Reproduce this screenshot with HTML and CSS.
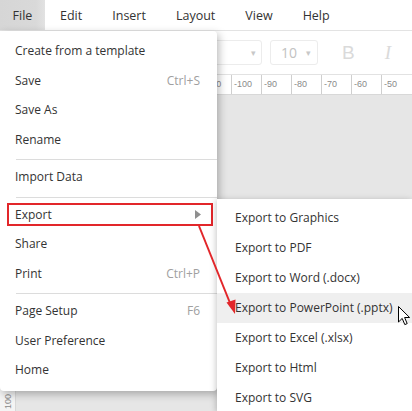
FILE: index.html
```html
<!DOCTYPE html>
<html>
<head>
<meta charset="utf-8">
<link rel="stylesheet" href="styles.css">
</head>
<body>
<div class="app">
  <div class="menubar">
    <div class="mb-item active">File</div>
    <div class="mb-item">Edit</div>
    <div class="mb-item">Insert</div>
    <div class="mb-item">Layout</div>
    <div class="mb-item">View</div>
    <div class="mb-item">Help</div>
  </div>
  <div class="toolbar">
    <div class="tb-select wide"><span class="caret">▾</span></div>
    <div class="tb-select size"><span class="val">10</span><span class="caret">▾</span></div>
    <div class="tb-btn bold">B</div>
    <div class="tb-btn italic">I</div>
  </div>
  <div class="ruler">
    <div class="tick">-110</div><div class="tick">-100</div>
    <div class="tick">-90</div><div class="tick">-80</div><div class="tick">-70</div><div class="tick">-60</div>
    <div class="tick">-50</div>
  </div>
  <div class="canvas">
    <div class="vruler"><span class="vlabel">100</span></div>
    <div class="sheet"></div>
  </div>
</div>

<div class="file-menu">
  <div class="mi">Create from a template</div>
  <div class="mi"><span>Save</span><span class="key">Ctrl+S</span></div>
  <div class="mi">Save As</div>
  <div class="mi">Rename</div>
  <div class="sep"></div>
  <div class="mi">Import Data</div>
  <div class="sep"></div>
  <div class="mi export"><span>Export</span>
    <svg class="sub-arrow" width="6" height="9" viewBox="0 0 6 9"><path d="M0 0 L6 4.5 L0 9 Z" fill="#8f8f8f"/></svg>
  </div>
  <div class="mi">Share</div>
  <div class="mi"><span>Print</span><span class="key">Ctrl+P</span></div>
  <div class="sep"></div>
  <div class="mi"><span>Page Setup</span><span class="key">F6</span></div>
  <div class="mi">User Preference</div>
  <div class="mi">Home</div>
</div>

<div class="sub-menu">
  <div class="si">Export to Graphics</div>
  <div class="si">Export to PDF</div>
  <div class="si">Export to Word (.docx)</div>
  <div class="si hover">Export to PowerPoint (.pptx)</div>
  <div class="si">Export to Excel (.xlsx)</div>
  <div class="si">Export to Html</div>
  <div class="si">Export to SVG</div>
</div>

<svg class="annot" width="412" height="411" viewBox="0 0 412 411">
  <line x1="199" y1="226" x2="230" y2="303" stroke="#e2262a" stroke-width="2"/>
  <path d="M226.5 302.5 L235 314 L235.5 299.5 Z" fill="#e2262a"/>
</svg>

<svg class="cursor" width="13" height="20" viewBox="0 0 13 20">
  <path d="M0.5 0.5 L0.5 16 L4.2 12.4 L6.8 18.6 L9.2 17.6 L6.6 11.5 L11.6 11.5 Z" fill="#fff" stroke="#000" stroke-width="1" stroke-linejoin="round"/>
</svg>
</body>
</html>
```

FILE: styles.css
```css
* { box-sizing: border-box; }
html, body {
  margin: 0;
  padding: 0;
}
body {
  width: 412px;
  height: 411px;
  overflow: hidden;
  position: relative;
  font-family: "Open Sans", "Noto Sans", sans-serif;
  font-size: 12px;
  color: #333;
  background: #e6e6e6;
}
.app {
  display: flex;
  flex-direction: column;
  height: 411px;
}
.menubar {
  height: 31px;
  display: flex;
  align-items: stretch;
  background: #fff;
  border-bottom: 1px solid #e3e3e3;
  font-size: 12.5px;
}
.mb-item {
  padding: 0 15px;
  display: flex;
  align-items: center;
  color: #333;
}
.mb-item.active {
  padding: 0 12px;
  width: 45px;
  justify-content: center;
  background: linear-gradient(to right, #d6d6d6, #d9d9d9 80%, #e2e2e2);
}
.toolbar {
  height: 43px;
  background: #fff;
  display: flex;
  align-items: center;
  padding-left: 160px;
}
.tb-select {
  height: 25px;
  border: 1px solid #ececec;
  border-radius: 3px;
  display: flex;
  align-items: center;
  justify-content: flex-end;
  padding-right: 5px;
  color: #c4c4c4;
}
.tb-select.wide { width: 102px; }
.tb-select.size {
  width: 48px;
  margin-left: 8px;
  justify-content: space-between;
  padding-left: 10px;
  padding-right: 6px;
}
.caret { font-size: 9px; color: #c8c8c8; }
.val { font-size: 14px; color: #c2c2c2; }
.tb-btn {
  color: #dadada;
  font-size: 19px;
}
.tb-btn.bold { margin-left: 24px; font-family: "Liberation Sans", sans-serif; }
.tb-btn.italic {
  margin-left: 30px;
  font-family: "Liberation Serif", serif;
  font-style: italic;
}
.ruler {
  height: 21px;
  background: #fff;
  border-top: 1px solid #e2e2e2;
  border-bottom: 1px solid #d8d8d8;
  display: flex;
  padding-left: 201px;
}
.tick {
  width: 30px;
  flex: none;
  border-left: 1px solid #cfcfcf;
  font-family: "Liberation Sans", sans-serif;
  font-size: 9px;
  color: #8a8a8a;
  padding-left: 2px;
  line-height: 19px;
}
.canvas {
  flex: 1;
  display: flex;
  background: #e6e6e6;
}
.vruler {
  width: 16px;
  background: #f4f4f4;
  border-right: 1px solid #d8d8d8;
  padding-top: 296px;
  display: flex;
  justify-content: center;
}
.vlabel {
  writing-mode: vertical-rl;
  transform: rotate(180deg);
  font-family: "Liberation Sans", sans-serif;
  font-size: 9px;
  color: #8a8a8a;
  height: 18px;
}
.sheet { flex: 1; }

.file-menu {
  position: absolute;
  top: 31px;
  left: 0;
  width: 217px;
  background: #fff;
  border-radius: 0 4px 4px 4px;
  box-shadow: 2px 3px 9px rgba(0,0,0,0.28);
  padding: 5px 0 6px;
}
.mi {
  position: relative;
  height: 29.5px;
  line-height: 29.5px;
  padding: 0 17px 0 15px;
  display: flex;
  justify-content: space-between;
  align-items: center;
  white-space: nowrap;
}
.key { color: #a0a0a0; }
.sep {
  height: 1px;
  margin: 5px 0 2px 16px;
  background: #dcdcdc;
}
.export::after {
  content: "";
  position: absolute;
  left: 7px;
  right: 4px;
  top: 3px;
  bottom: 3px;
  border: 2px solid #e2262a;
}
.sub-arrow { margin-right: -1px; }

.sub-menu {
  position: absolute;
  top: 199px;
  left: 217px;
  width: 195px;
  height: 212px;
  background: #fff;
  box-shadow: -1px 1px 6px rgba(0,0,0,0.22);
  padding-top: 4px;
}
.si {
  height: 30px;
  line-height: 30px;
  padding-left: 18px;
  white-space: nowrap;
}
.si.hover { background: #efefef; }

.annot {
  position: absolute;
  left: 0;
  top: 0;
  pointer-events: none;
}
.cursor {
  position: absolute;
  left: 398px;
  top: 306px;
}
```
